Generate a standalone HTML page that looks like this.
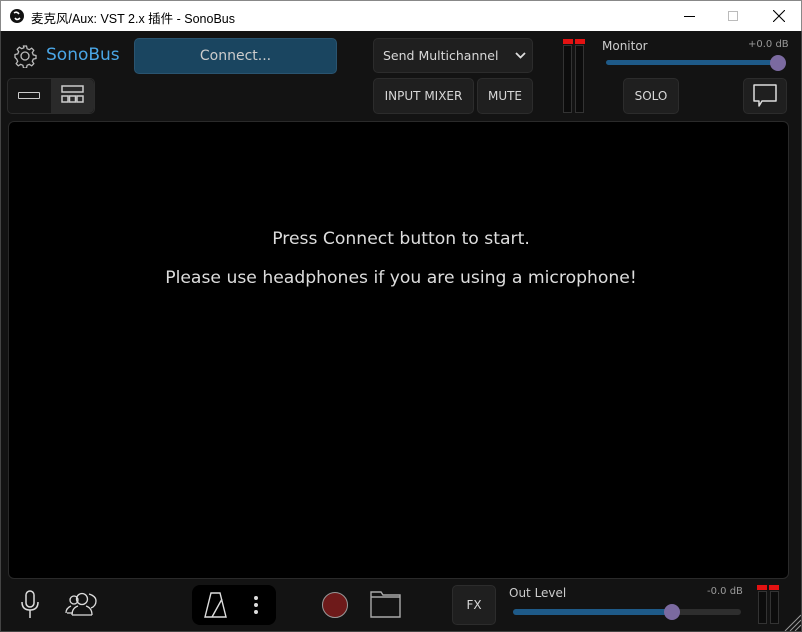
<!DOCTYPE html>
<html><head><meta charset="utf-8"><style>
*{box-sizing:border-box;margin:0;padding:0}
body{width:802px;height:632px;overflow:hidden;background:#131313;font-family:"DejaVu Sans","Liberation Sans","Noto Sans CJK SC",sans-serif;position:relative}
.abs{position:absolute}
.title{left:0;top:0;width:802px;height:31px;background:#fff;border:1px solid #888;border-bottom:none}
.btn{position:absolute;background:#1f1f1f;border:1px solid #2c2c2c;border-radius:5px;color:#d8d8d8;font-size:12px;display:flex;align-items:center;justify-content:center}
.meter{position:absolute;width:9px;background:#0c0c0c;border:1px solid #333}
.red{position:absolute;width:10px;height:5px;background:#e31212}
</style></head><body>
<div class="abs title">
 <svg class="abs" style="left:9px;top:8px" width="14" height="14" viewBox="0 0 14 14"><circle cx="7" cy="7" r="7" fill="#111"/><path d="M4 4 Q7 2 9 5 M10 9 Q7 12 5 9" stroke="#fff" stroke-width="1.6" fill="none"/></svg>
 <div class="abs" style="left:30px;top:7px;font-size:12.5px;color:#000;font-family:'Liberation Sans','Noto Sans CJK SC',sans-serif">麦克风/Aux: VST 2.x 插件 - SonoBus</div>
 <div class="abs" style="left:683px;top:15px;width:11px;height:1px;background:#000"></div>
 <div class="abs" style="left:727px;top:10px;width:10px;height:10px;border:1px solid #bbb"></div>
 <svg class="abs" style="left:772px;top:9px" width="12" height="12"><path d="M0 0L12 12M12 0L0 12" stroke="#000" stroke-width="1.1"/></svg>
</div>
<div class="abs" style="left:0;top:31px;width:1px;height:601px;background:#444"></div>
<div class="abs" style="right:0;top:31px;width:1px;height:601px;background:#444"></div>
<div class="abs" style="left:0;bottom:0;width:802px;height:1px;background:#444"></div>
<!-- gear -->
<svg class="abs" style="left:13px;top:44px" width="24" height="24" viewBox="0 0 24 24"><g fill="none" stroke="#bbb" stroke-width="1.3"><circle cx="12" cy="12" r="4"/><path d="M10.5 2h3l.6 2.7 2.2 1 2.4-1.5 2.1 2.1-1.5 2.4 1 2.2 2.7.6v3l-2.7.6-1 2.2 1.5 2.4-2.1 2.1-2.4-1.5-2.2 1-.6 2.7h-3l-.6-2.7-2.2-1-2.4 1.5-2.1-2.1 1.5-2.4-1-2.2L2 13.5v-3l2.7-.6 1-2.2-1.5-2.4 2.1-2.1 2.4 1.5 2.2-1z"/></g></svg>
<div class="abs" style="left:46px;top:45px;font-size:17px;color:#4aa6e6">SonoBus</div>
<div class="btn" style="left:134px;top:38px;width:203px;height:36px;background:#1a4560;border-color:#2a5470;font-size:14px;color:#ccc">Connect...</div>
<div class="btn" style="left:7px;top:78px;width:88px;height:36px;background:#171717"></div>
<div class="abs" style="left:51px;top:79px;width:43px;height:34px;background:#2a2a2a;border-radius:0 5px 5px 0"></div>
<div class="abs" style="left:18px;top:92px;width:22px;height:7px;border:1.5px solid #ccc;border-radius:1px"></div>
<svg class="abs" style="left:61px;top:85px" width="24" height="21"><g fill="none" stroke="#ccc" stroke-width="1.5"><rect x="1" y="1" width="21" height="6"/><rect x="1" y="11" width="6" height="6"/><rect x="8.5" y="11" width="6" height="6"/><rect x="16" y="11" width="6" height="6"/></g></svg>
<div class="btn" style="left:373px;top:38px;width:160px;height:35px;justify-content:flex-start;padding-left:9px;font-size:12.5px">Send Multichannel</div>
<svg class="abs" style="left:515px;top:52px" width="11" height="7"><path d="M1 1l4.5 4.5L10 1" stroke="#ddd" stroke-width="1.8" fill="none"/></svg>
<div class="btn" style="left:373px;top:78px;width:101px;height:36px">INPUT MIXER</div>
<div class="btn" style="left:477px;top:78px;width:56px;height:36px">MUTE</div>
<div class="red" style="left:563px;top:39px"></div><div class="red" style="left:575px;top:39px"></div>
<div class="meter" style="left:563px;top:45px;height:68px"></div><div class="meter" style="left:575px;top:45px;height:68px"></div>
<div class="abs" style="left:602px;top:39px;font-size:12px;color:#ccc">Monitor</div>
<div class="abs" style="left:748px;top:39px;font-size:10px;color:#999">+0.0 dB</div>
<div class="abs" style="left:606px;top:60px;width:172px;height:5px;border-radius:3px;background:#1e5a88"></div>
<div class="abs" style="left:770px;top:55px;width:16px;height:16px;border-radius:50%;background:#7b6aa0"></div>
<div class="btn" style="left:623px;top:78px;width:56px;height:36px">SOLO</div>
<div class="btn" style="left:743px;top:78px;width:44px;height:36px"></div>
<svg class="abs" style="left:752px;top:84px" width="26" height="25"><path d="M2 1h22v16H10l-3 5v-5H2z" fill="none" stroke="#ddd" stroke-width="1.5" stroke-linejoin="round"/></svg>
<!-- main -->
<div class="abs" style="left:8px;top:121px;width:781px;height:458px;background:#000;border:1px solid #2a2a2a;border-radius:6px"></div>
<div class="abs" style="left:0;top:229px;width:802px;text-align:center;font-size:17.2px;color:#ddd">Press Connect button to start.</div>
<div class="abs" style="left:0;top:268px;width:802px;text-align:center;font-size:17.2px;color:#ddd">Please use headphones if you are using a microphone!</div>
<!-- bottom -->
<svg class="abs" style="left:20px;top:590px" width="22" height="29"><g fill="none" stroke="#ddd" stroke-width="1.5"><rect x="6" y="1" width="8" height="16" rx="4"/><path d="M2 12q0 8 8 8t8-8M10 20v8"/></g></svg>
<svg class="abs" style="left:64px;top:591px" width="36" height="25"><g fill="none" stroke="#ddd" stroke-width="1.3"><circle cx="18" cy="8" r="5.5"/><path d="M8 24q0-7 6-9M28 24q0-7-6-9M8 24h20"/><circle cx="10" cy="9" r="4"/><path d="M2 22q0-5 5-7M3 22h6"/><path d="M25 3q7 2 7 7t-5 7"/></g></svg>
<div class="abs" style="left:192px;top:585px;width:84px;height:40px;background:#000;border-radius:8px"></div>
<svg class="abs" style="left:204px;top:592px" width="24" height="26"><path d="M7 1h9l6 24H1zM8 25l10-18" fill="none" stroke="#ddd" stroke-width="1.4"/></svg>
<div class="abs" style="left:254px;top:596px;width:4px;height:4px;border-radius:50%;background:#ddd;box-shadow:0 7px 0 #ddd,0 14px 0 #ddd"></div>
<div class="abs" style="left:322px;top:592px;width:26px;height:26px;border-radius:50%;background:#6e1a1a;border:1.5px solid #999"></div>
<svg class="abs" style="left:370px;top:591px" width="31" height="27"><path d="M1 1h10l2 3h17v22H1zM1 6h29" fill="none" stroke="#aaa" stroke-width="1.4"/></svg>
<div class="btn" style="left:452px;top:585px;width:44px;height:40px">FX</div>
<div class="abs" style="left:509px;top:586px;font-size:12px;color:#ccc">Out Level</div>
<div class="abs" style="left:707px;top:586px;font-size:10px;color:#999">-0.0 dB</div>
<div class="abs" style="left:513px;top:609px;width:228px;height:6px;border-radius:3px;background:#2e2e2e"></div>
<div class="abs" style="left:513px;top:609px;width:160px;height:6px;border-radius:3px;background:#1e5a88"></div>
<div class="abs" style="left:664px;top:604px;width:16px;height:16px;border-radius:50%;background:#7b6aa0"></div>
<div class="red" style="left:757px;top:585px"></div><div class="red" style="left:769px;top:585px"></div>
<div class="meter" style="left:758px;top:591px;height:33px"></div><div class="meter" style="left:770px;top:591px;height:33px"></div>
<svg class="abs" style="left:784px;top:614px" width="17" height="17"><path d="M17 1L1 17M17 6L6 17M17 11L11 17" stroke="#999" stroke-width="1"/></svg>
</body></html>
